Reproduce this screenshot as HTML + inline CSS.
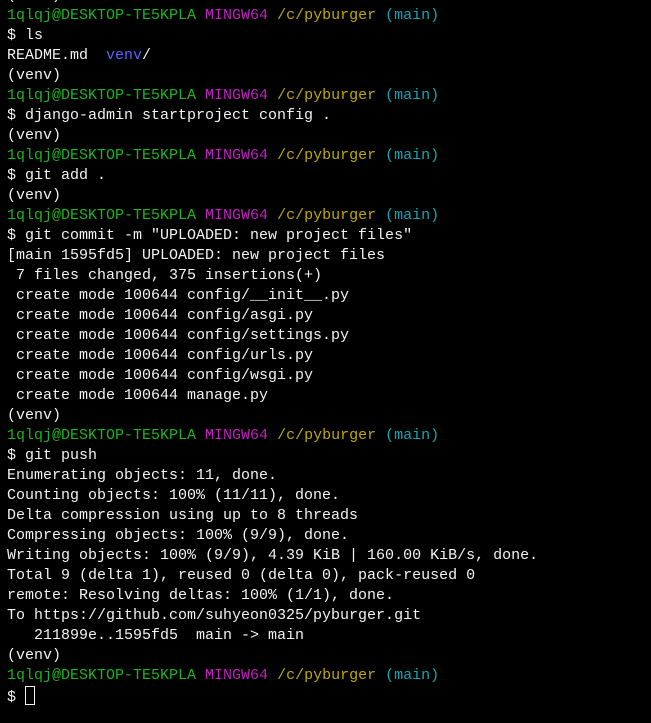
<!DOCTYPE html>
<html><head><meta charset="utf-8"><style>
html,body{margin:0;padding:0;background:#000;width:651px;height:723px;overflow:hidden}
pre{position:absolute;left:7px;top:-14px;margin:0;font-family:"Liberation Mono",monospace;font-size:15px;line-height:20px;color:#f2f2f2}
.g{color:#1cb51c}.m{color:#c020c0}.y{color:#c0a800}.c{color:#10a8b8}.b{color:#6060ff}
.cur{display:inline-block;width:8px;height:17px;border:1px solid #f2f2f2;vertical-align:-4px}
</style></head><body><pre>(venv)
<span class="g">1qlqj@DESKTOP-TE5KPLA</span> <span class="m">MINGW64</span> <span class="y">/c/pyburger</span> <span class="c">(main)</span>
$ ls
README.md  <span class="b">venv</span>/
(venv)
<span class="g">1qlqj@DESKTOP-TE5KPLA</span> <span class="m">MINGW64</span> <span class="y">/c/pyburger</span> <span class="c">(main)</span>
$ django-admin startproject config .
(venv)
<span class="g">1qlqj@DESKTOP-TE5KPLA</span> <span class="m">MINGW64</span> <span class="y">/c/pyburger</span> <span class="c">(main)</span>
$ git add .
(venv)
<span class="g">1qlqj@DESKTOP-TE5KPLA</span> <span class="m">MINGW64</span> <span class="y">/c/pyburger</span> <span class="c">(main)</span>
$ git commit -m "UPLOADED: new project files"
[main 1595fd5] UPLOADED: new project files
 7 files changed, 375 insertions(+)
 create mode 100644 config/__init__.py
 create mode 100644 config/asgi.py
 create mode 100644 config/settings.py
 create mode 100644 config/urls.py
 create mode 100644 config/wsgi.py
 create mode 100644 manage.py
(venv)
<span class="g">1qlqj@DESKTOP-TE5KPLA</span> <span class="m">MINGW64</span> <span class="y">/c/pyburger</span> <span class="c">(main)</span>
$ git push
Enumerating objects: 11, done.
Counting objects: 100% (11/11), done.
Delta compression using up to 8 threads
Compressing objects: 100% (9/9), done.
Writing objects: 100% (9/9), 4.39 KiB | 160.00 KiB/s, done.
Total 9 (delta 1), reused 0 (delta 0), pack-reused 0
remote: Resolving deltas: 100% (1/1), done.
To https://github.com/suhyeon0325/pyburger.git
   211899e..1595fd5  main -&gt; main
(venv)
<span class="g">1qlqj@DESKTOP-TE5KPLA</span> <span class="m">MINGW64</span> <span class="y">/c/pyburger</span> <span class="c">(main)</span>
$ <span class="cur"></span></pre></body></html>
